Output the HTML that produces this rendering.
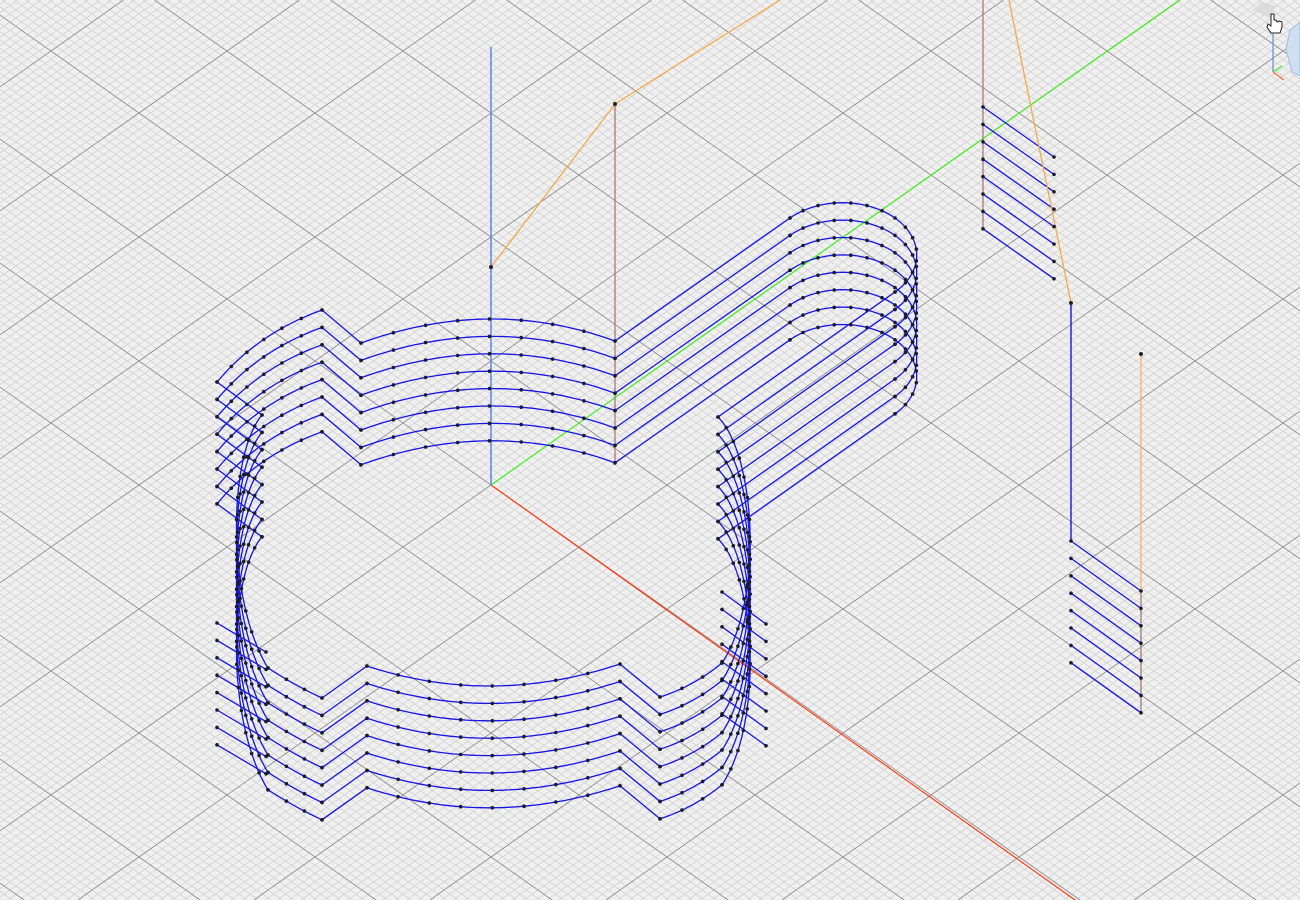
<!DOCTYPE html>
<html><head><meta charset="utf-8"><style>
html,body{margin:0;padding:0;background:#f0f0f0;overflow:hidden;width:1300px;height:900px}
#w{position:absolute;left:0;top:0;width:1300px;height:900px;overflow:hidden}
svg{display:block;overflow:hidden}
</style></head><body>
<div id="w"><svg id="s" width="1300" height="900" viewBox="0 0 1300 900" xmlns="http://www.w3.org/2000/svg"></svg></div>
<script>
(function(){
var s='';
function P(a,b){return [491+5.867*(a+b),485+4.133*(a-b)];}
function clip(p,q){
 var x0=p[0],y0=p[1],dx=q[0]-x0,dy=q[1]-y0,t0=0,t1=1;
 var pp=[-dx,dx,-dy,dy],qq=[x0,1300-x0,y0,900-y0];
 for(var i=0;i<4;i++){
  if(pp[i]===0){if(qq[i]<0)return null;}
  else{var r=qq[i]/pp[i];if(pp[i]<0){if(r>t1)return null;if(r>t0)t0=r;}else{if(r<t0)return null;if(r<t1)t1=r;}}
 }
 return [[x0+t0*dx,y0+t0*dy],[x0+t1*dx,y0+t1*dy]];
}
function line(p,q,c,w){var r=clip(p,q);if(!r)return;p=r[0];q=r[1];
 s+='<line x1="'+p[0].toFixed(1)+'" y1="'+p[1].toFixed(1)+'" x2="'+q[0].toFixed(1)+'" y2="'+q[1].toFixed(1)+'" stroke="'+c+'" stroke-width="'+w+'"/>';}
s+='<rect width="1300" height="900" fill="#f0f0f0"/>';
var R=140;
for(var pass=0;pass<2;pass++){
 for(var i=-R;i<=R;i++){
  var maj=(i%15===0);
  if((pass===0&&maj)||(pass===1&&!maj))continue;
  var c=maj?'#8e8e8e':'#d4d4d4';
  line(P(-R,i),P(R,i),c,0.9);
  line(P(i,-R),P(i,R),c,0.9);
 }
}
line([491,485],[1075,900],'#ff3a10',1.2);
line([491,485],[1180,0],'#44ee22',1.2);
line([491,485],[491,47],'#5f8fe8',1.6);
var paths='',dots='';
function pl(pts,dy){paths+='<polyline points="'+pts.map(function(p){return p[0].toFixed(1)+','+(p[1]+dy).toFixed(1);}).join(' ')+'"/>';}
function dt(p,dy){dots+='<circle cx="'+p[0].toFixed(1)+'" cy="'+(p[1]+dy).toFixed(1)+'" r="1.8"/>';}
function quad(p,c,q,n){var r=[];for(var i=0;i<=n;i++){var t=i/n,u=1-t;r.push([u*u*p[0]+2*u*t*c[0]+t*t*q[0],u*u*p[1]+2*u*t*c[1]+t*t*q[1]]);}return r;}
function cub(p,c1,c2,q,n){var r=[];for(var i=0;i<=n;i++){var t=i/n,u=1-t;r.push([u*u*u*p[0]+3*u*u*t*c1[0]+3*u*t*t*c2[0]+t*t*t*q[0],u*u*u*p[1]+3*u*u*t*c1[1]+3*u*t*t*c2[1]+t*t*t*q[1]]);}return r;}
function semi(n){var r=[];for(var i=0;i<=n;i++){var t=Math.PI*i/n;r.push([842.5+Math.cos(t)*52.5+Math.sin(t)*52.5,255+Math.cos(t)*37-Math.sin(t)*37]);}return r;}
function curve(f,args,nd,dy){var fine=f.apply(null,args.concat([48]));pl(fine,dy);var d=f.apply(null,args.concat([nd]));d.forEach(function(p){dt(p,dy);});}
function seg(p,q,dy){pl([p,q],dy);dt(p,dy);dt(q,dy);}
for(var k=0;k<8;k++){
 var dy=17.4*k;
 curve(quad,[[615,341],[491,296],[361,343]],8,dy);
 seg([361,343],[322,310],dy);
 curve(quad,[[322,310],[258,333],[217,382]],6,dy);
 seg([217,382],[262,415],dy);
 curve(cub,[[262,415],[228,455],[226,600],[268,668]],13,dy);
 curve(quad,[[268,668],[296,686],[322,698]],3,dy);
 seg([322,698],[367,666],dy);
 curve(quad,[[367,666],[491,707],[620,664]],8,dy);
 seg([620,664],[660,697],dy);
 curve(quad,[[660,697],[694,686],[722,663]],3,dy);
 curve(cub,[[722,663],[764,600],[756,455],[718,417]],13,dy);
 seg([718,417],[895,292],dy);
 curve(function(n){return semi(n);},[],14,dy);
 seg([790,218],[615,341],dy);
 seg([217,623],[266,652],dy);
 seg([722,592],[766,624],dy);
 seg([983,107],[1054,157],dy);
 seg([1071,541],[1141,591],dy);
}
line([615,104],[615,465],'#a87878',1.3);
line([983,0],[983,229],'#a87878',1.3);
line([1141,591],[1141,714],'#a87878',1.3);
s+='<g fill="none" stroke="#1414e6" stroke-width="1.3" stroke-linejoin="round">'+paths+'</g>';
line([491,267],[615,104],'#f5a84a',1.3);
line([615,104],[780,0],'#f5a84a',1.3);
line([1009,0],[1071,303],'#f5a84a',1.3);
line([1071,303],[1071,541],'#1414e6',1.4);
line([1141,354],[1141,591],'#f5b060',1.3);
s+='<g fill="#1a1a2a">'+dots+'</g>';
[[491,267],[615,104],[1071,303],[1141,354]].forEach(function(p){s+='<circle cx="'+p[0]+'" cy="'+p[1]+'" r="2" fill="#222"/>';});
s+='<path d="M1300 22 L1290 30 L1286 50 L1292 72 L1300 76 Z" fill="#cfdff0" stroke="#9fbde0" stroke-width="1"/>';
s+='<path d="M1252 10 L1262 2 L1276 6 L1270 18 Z" fill="#d8d8d8" opacity="0.8"/>';
line([1273,34],[1273,72],'#6f8fe8',1.3);
line([1273,72],[1282,66],'#44ee22',1.3);
line([1273,72],[1284,80],'#ff6a40',1.3);
s+='<path d="M1271 14 L1271 26 L1268 24 L1267 27 L1271 33 L1280 33 L1282 27 L1282 22 L1279 21 L1277 22 L1276 20 L1274 20 L1274 14 Z" fill="#fff" stroke="#222" stroke-width="1"/>';
document.getElementById('s').innerHTML=s;
})();
</script>
</body></html>
